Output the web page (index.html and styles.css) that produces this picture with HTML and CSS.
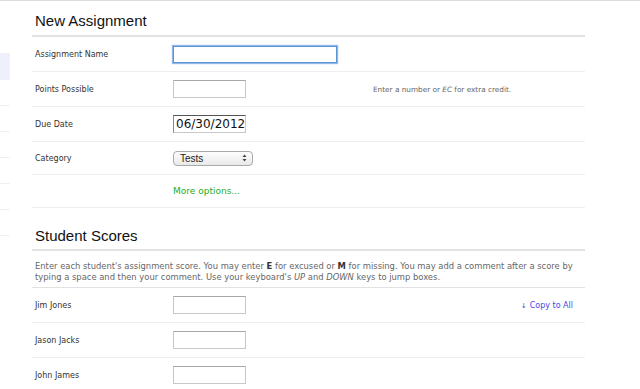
FILE: index.html
```html
<!DOCTYPE html>
<html lang="en">
<head>
    <meta charset="UTF-8">
    <title>New Assignment</title>
    <link rel="stylesheet" href="styles.css">
</head>
<body>
    <div class="sidebar">
        <div class="side-item"></div>
        <div class="side-item active"></div>
        <div class="side-item"></div>
        <div class="side-item"></div>
        <div class="side-item"></div>
        <div class="side-item"></div>
        <div class="side-item"></div>
        <div class="side-item"></div>
    </div>

    <div class="main">
        <h2 class="section-title">New Assignment</h2>

        <div class="row">
            <div class="label">Assignment Name</div>
            <div class="field"><input type="text" class="text-input wide focused"></div>
        </div>
        <div class="row">
            <div class="label">Points Possible</div>
            <div class="field"><input type="text" class="text-input"></div>
            <div class="hint">Enter a number or <em>EC</em> for extra credit.</div>
        </div>
        <div class="row">
            <div class="label">Due Date</div>
            <div class="field"><input type="text" class="text-input date" value="06/30/2012"></div>
        </div>
        <div class="row short">
            <div class="label">Category</div>
            <div class="field">
                <div class="select">
                    <span>Tests</span>
                    <svg class="arrows" width="5" height="8" viewBox="0 0 5 8">
                        <path d="M0.5 3 L2.5 0.5 L4.5 3 Z M0.5 5 L2.5 7.5 L4.5 5 Z" fill="#444"/>
                    </svg>
                </div>
            </div>
        </div>
        <div class="row short">
            <div class="label"></div>
            <div class="field"><a class="more-link">More options...</a></div>
        </div>

        <h2 class="section-title second">Student Scores</h2>

        <p class="intro">
            Enter each student's assignment score. You may enter <b>E</b> for excused or <b>M</b> for missing. You may add a comment after a score by<br>
            typing a space and then your comment. Use your keyboard's <em>UP</em> and <em>DOWN</em> keys to jump boxes.
        </p>

        <div class="row">
            <div class="label">Jim Jones</div>
            <div class="field"><input type="text" class="text-input"></div>
            <div class="copy"><a class="copy-link"><span class="down">&#8595;</span>Copy to All</a></div>
        </div>
        <div class="row">
            <div class="label">Jason Jacks</div>
            <div class="field"><input type="text" class="text-input"></div>
        </div>
        <div class="row">
            <div class="label">John James</div>
            <div class="field"><input type="text" class="text-input"></div>
        </div>
    </div>
</body>
</html>
```

FILE: styles.css
```css
* {
    margin: 0;
    padding: 0;
    box-sizing: border-box;
}

body {
    font-family: "DejaVu Sans", Verdana, sans-serif;
    font-size: 8px;
    color: #333;
    background: white;
    display: flex;
    align-items: flex-start;
    width: 640px;
    height: 389px;
    overflow: hidden;
    border-top: 1px solid #dcdcdc;
}

.sidebar {
    width: 10px;
    border-top: 1px solid #1e7bf0;
    margin-top: -1px;
    padding-top: 27px;
}

.side-item {
    height: 26px;
    border-bottom: 1px solid #f0f0f4;
}

.side-item.active {
    background: #eef0fb;
    border-bottom: none;
}

.main {
    margin-left: 22px;
    width: 553px;
}

.section-title {
    font-family: "Liberation Sans", Arial, sans-serif;
    font-weight: normal;
    font-size: 15px;
    color: #111;
    height: 36px;
    padding: 11px 0 0 3px;
    border-bottom: 2px solid #e2e2e2;
}

.section-title.second {
    margin-top: 7px;
    height: 36px;
    padding-top: 12px;
}

.row {
    display: grid;
    grid-template-columns: 141px 200px 1fr;
    align-items: center;
    height: 35px;
    border-bottom: 1px solid #efefef;
}

.row.short {
    height: 33px;
}

.label {
    padding-left: 3px;
}

.text-input {
    width: 73px;
    height: 18px;
    border: 1px solid #c8c8c8;
    border-top-color: #a8a8a8;
    background: white;
    outline: none;
    font-family: inherit;
}

.text-input.wide {
    width: 164px;
    height: 17px;
}

.text-input.focused {
    border: 1px solid #5b93d3;
    box-shadow: 0 0 1px 1px #8fb9ea;
}

.text-input.date {
    height: 18px;
    font-family: "DejaVu Sans", sans-serif;
    font-size: 12px;
    color: #111;
    padding-left: 2px;
    border-top-color: #555;
    border-left-color: #888;
}

.hint {
    color: #666;
    font-size: 7.3px;
}

.select {
    width: 80px;
    height: 15px;
    border: 1px solid #a9a9a9;
    border-radius: 4px;
    background: linear-gradient(#fdfdfd, #e9e9e9);
    display: flex;
    align-items: center;
    justify-content: space-between;
    padding: 0 5px 0 6px;
    font-family: "Liberation Sans", Arial, sans-serif;
    font-size: 10px;
    color: #222;
}

.more-link {
    color: #27ad27;
    font-size: 9px;
}

.intro {
    color: #666;
    font-size: 8.4px;
    line-height: 11px;
    padding: 10px 0 4px 3px;
    border-bottom: 1px solid #e2e2e2;
    white-space: nowrap;
}

.intro b {
    color: #333;
}

.copy {
    text-align: right;
    padding-right: 12px;
}

.copy-link {
    color: #4747e6;
}

.down {
    font-size: 7px;
    margin-right: 3px;
}
```
